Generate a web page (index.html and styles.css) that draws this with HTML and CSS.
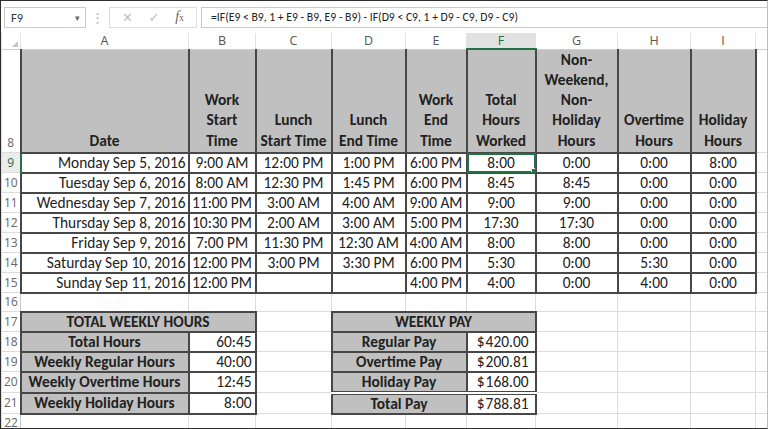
FILE: index.html
```html
<!DOCTYPE html>
<html lang="en">
<head>
  <meta charset="UTF-8" />
  <meta name="viewport" content="width=device-width, initial-scale=1" />
  <title>Weekly Pay</title>
  <link rel="stylesheet" href="styles.css">
</head>
<body>
  <div class="frame">
    <div class="formula-bar">
      <div class="name-box">F9 <span class="arrow">&#9662;</span></div>
      <div class="dots">&#8942;</div>
      <div class="buttons">
        <span class="btn">&#10005;</span>
        <span class="btn">&#10003;</span>
        <span class="btn fx"><i>f</i><small>x</small></span>
      </div>
      <div class="formula">=IF(E9 &lt; B9, 1 + E9 - B9, E9 - B9) - IF(D9 &lt; C9, 1 + D9 - C9, D9 - C9)</div>
    </div>

    <table class="sheet">
      <colgroup>
        <col style="width:19px">
        <col style="width:168px">
        <col style="width:67px">
        <col style="width:76px">
        <col style="width:74px">
        <col style="width:61px">
        <col style="width:69px">
        <col style="width:82px">
        <col style="width:73px">
        <col style="width:65px">
        <col style="width:13px">
      </colgroup>
      <tr class="colhead">
        <td class="corner"><span class="tri"></span></td>
        <td>A</td><td>B</td><td>C</td><td>D</td><td>E</td>
        <td class="active">F</td><td>G</td><td>H</td><td>I</td><td></td>
      </tr>
      <tr class="head">
        <td class="rn">8</td>
        <td class="d">Date</td>
        <td class="d">Work<br>Start<br>Time</td>
        <td class="d">Lunch<br>Start Time</td>
        <td class="d">Lunch<br>End Time</td>
        <td class="d">Work<br>End<br>Time</td>
        <td class="d">Total<br>Hours<br>Worked</td>
        <td class="d">Non-<br>Weekend,<br>Non-<br>Holiday<br>Hours</td>
        <td class="d">Overtime<br>Hours</td>
        <td class="d">Holiday<br>Hours</td>
        <td></td>
      </tr>
      <tr class="row">
        <td class="rn cur">9</td>
        <td class="d date">Monday Sep 5, 2016</td>
        <td class="d">9:00 AM</td><td class="d">12:00 PM</td><td class="d">1:00 PM</td><td class="d">6:00 PM</td>
        <td class="d sel">8:00</td><td class="d">0:00</td><td class="d">0:00</td><td class="d">8:00</td><td></td>
      </tr>
      <tr class="row">
        <td class="rn">10</td>
        <td class="d date">Tuesday Sep 6, 2016</td>
        <td class="d">8:00 AM</td><td class="d">12:30 PM</td><td class="d">1:45 PM</td><td class="d">6:00 PM</td>
        <td class="d">8:45</td><td class="d">8:45</td><td class="d">0:00</td><td class="d">0:00</td><td></td>
      </tr>
      <tr class="row">
        <td class="rn">11</td>
        <td class="d date">Wednesday Sep 7, 2016</td>
        <td class="d">11:00 PM</td><td class="d">3:00 AM</td><td class="d">4:00 AM</td><td class="d">9:00 AM</td>
        <td class="d">9:00</td><td class="d">9:00</td><td class="d">0:00</td><td class="d">0:00</td><td></td>
      </tr>
      <tr class="row">
        <td class="rn">12</td>
        <td class="d date">Thursday Sep 8, 2016</td>
        <td class="d">10:30 PM</td><td class="d">2:00 AM</td><td class="d">3:00 AM</td><td class="d">5:00 PM</td>
        <td class="d">17:30</td><td class="d">17:30</td><td class="d">0:00</td><td class="d">0:00</td><td></td>
      </tr>
      <tr class="row">
        <td class="rn">13</td>
        <td class="d date">Friday Sep 9, 2016</td>
        <td class="d">7:00 PM</td><td class="d">11:30 PM</td><td class="d">12:30 AM</td><td class="d">4:00 AM</td>
        <td class="d">8:00</td><td class="d">8:00</td><td class="d">0:00</td><td class="d">0:00</td><td></td>
      </tr>
      <tr class="row">
        <td class="rn">14</td>
        <td class="d date">Saturday Sep 10, 2016</td>
        <td class="d">12:00 PM</td><td class="d">3:00 PM</td><td class="d">3:30 PM</td><td class="d">6:00 PM</td>
        <td class="d">5:30</td><td class="d">0:00</td><td class="d">5:30</td><td class="d">0:00</td><td></td>
      </tr>
      <tr class="row">
        <td class="rn">15</td>
        <td class="d date">Sunday Sep 11, 2016</td>
        <td class="d">12:00 PM</td><td class="d"></td><td class="d"></td><td class="d">4:00 PM</td>
        <td class="d">4:00</td><td class="d">0:00</td><td class="d">4:00</td><td class="d">0:00</td><td></td>
      </tr>
      <tr class="row tall">
        <td class="rn">16</td>
        <td></td><td></td><td></td><td></td><td></td><td></td><td></td><td></td><td></td><td></td>
      </tr>
      <tr class="row">
        <td class="rn">17</td>
        <td class="d lbl" colspan="2">TOTAL WEEKLY HOURS</td>
        <td></td>
        <td class="d lbl" colspan="3">WEEKLY PAY</td>
        <td></td><td></td><td></td><td></td>
      </tr>
      <tr class="row">
        <td class="rn">18</td>
        <td class="d lbl">Total Hours</td><td class="d num">60:45</td>
        <td></td>
        <td class="d lbl" colspan="2">Regular Pay</td><td class="d money"><span>$</span>420.00</td>
        <td></td><td></td><td></td><td></td>
      </tr>
      <tr class="row">
        <td class="rn">19</td>
        <td class="d lbl">Weekly Regular Hours</td><td class="d num">40:00</td>
        <td></td>
        <td class="d lbl" colspan="2">Overtime Pay</td><td class="d money"><span>$</span>200.81</td>
        <td></td><td></td><td></td><td></td>
      </tr>
      <tr class="row tall">
        <td class="rn">20</td>
        <td class="d lbl">Weekly Overtime Hours</td><td class="d num">12:45</td>
        <td></td>
        <td class="d lbl" colspan="2">Holiday Pay</td><td class="d money"><span>$</span>168.00</td>
        <td></td><td></td><td></td><td></td>
      </tr>
      <tr class="row tall">
        <td class="rn">21</td>
        <td class="d lbl">Weekly Holiday Hours</td><td class="d num">8:00</td>
        <td></td>
        <td class="d lbl total" colspan="2">Total Pay</td><td class="d money total"><span>$</span>788.81</td>
        <td></td><td></td><td></td><td></td>
      </tr>
      <tr class="row">
        <td class="rn">22</td>
        <td></td><td></td><td></td><td></td><td></td><td></td><td></td><td></td><td></td><td></td>
      </tr>
    </table>
  </div>
</body>
</html>
```

FILE: styles.css
```css
html, body {
  margin: 0;
  background: #fff;
}
.frame {
  width: 768px;
  height: 429px;
  box-sizing: border-box;
  border: 1px solid #2e2e2e;
  border-right-color: #bdbdbd;
  overflow: hidden;
  font-family: Carlito, Lato, "Open Sans", sans-serif;
  color: #222;
}

/* formula bar */
.formula-bar {
  height: 32px;
  display: flex;
  align-items: center;
  padding: 0 0 0 3px;
  box-sizing: border-box;
}
.name-box {
  width: 82px;
  height: 21px;
  box-sizing: border-box;
  border: 1px solid #cacaca;
  display: flex;
  align-items: center;
  justify-content: space-between;
  padding: 0 5px 0 6px;
  font-size: 12.5px;
  color: #333;
}
.name-box .arrow {
  font-size: 9px;
  color: #666;
}
.dots {
  width: 23px;
  text-align: center;
  color: #b5b5b5;
  font-size: 13px;
}
.buttons {
  width: 88px;
  height: 21px;
  box-sizing: border-box;
  border: 1px solid #dedede;
  display: flex;
  align-items: center;
  justify-content: space-around;
  padding: 0 4px;
}
.btn {
  color: #c0c0c0;
  font-size: 13px;
  font-family: "DejaVu Sans", sans-serif;
}
.btn.fx {
  color: #666;
  font-family: "Liberation Serif", serif;
  font-size: 14px;
}
.btn.fx small {
  font-size: 10px;
}
.formula {
  flex: 1;
  margin-left: 4px;
  height: 21px;
  box-sizing: border-box;
  border: 1px solid #cacaca;
  border-right: none;
  padding: 0 9px;
  display: flex;
  align-items: center;
  font-size: 11.7px;
  color: #222;
  white-space: nowrap;
}

/* grid */
.sheet {
  border-collapse: collapse;
  table-layout: fixed;
  width: 767px;
  font-size: 15.4px;
}
.sheet td {
  border: 1px solid #dcdcdc;
  padding: 0 2px;
  text-align: center;
  white-space: nowrap;
  overflow: hidden;
  line-height: 18px;
}
.colhead td {
  height: 14px;
  font-size: 12.5px;
  line-height: 14px;
  color: #555;
  font-family: "Open Sans", sans-serif;
  border-top: none;
  border-color: #e2e2e2;
  border-bottom-color: #d0d0d0;
  overflow: visible;
  padding-top: 1px;
}
.colhead td.active {
  background: #e1e1e1;
  color: #217346;
  border-bottom: 2px solid #217346;
}
.corner {
  position: relative;
}
.tri {
  position: absolute;
  right: 2px;
  bottom: 2px;
  border-left: 6px solid transparent;
  border-bottom: 6px solid #c4c4c4;
}
.rn {
  font-size: 12px;
  color: #666;
  font-family: "Open Sans", sans-serif;
  border-right-color: #c8c8c8 !important;
  vertical-align: bottom;
}
.rn.cur {
  color: #217346;
  background: #ececec;
  border-right: 2px solid #217346 !important;
}
.row .rn {
  vertical-align: middle;
}
.head td {
  height: 98px;
  vertical-align: bottom;
}
.sheet td.d {
  border: 2px solid #474747;
}
.head td.d {
  background: #c0c0c0;
  font-weight: bold;
  line-height: 20.3px;
  padding: 0 2px 1px;
  border-top: 1px solid #e2e2e2;
}
.row td {
  height: 16px;
}
.row.tall td {
  height: 17px;
}
.sheet td.date {
  text-align: right;
  padding-right: 2px;
}
.sheet td.lbl {
  background: #c0c0c0;
  font-weight: bold;
}
.sheet td.num {
  text-align: right;
  padding-right: 3px;
}
.sheet td.money {
  text-align: right;
  padding-right: 6px;
}
.money span {
  margin-right: 1px;
}
.sheet td.total {
  border-top: 4px double #474747;
}
.sheet td.sel {
  position: relative;
  outline: 2px solid #217346;
  outline-offset: -2px;
}
.sel::after {
  content: "";
  position: absolute;
  right: -3px;
  bottom: -3px;
  width: 5px;
  height: 5px;
  background: #217346;
  border: 1px solid #fff;
}
```
